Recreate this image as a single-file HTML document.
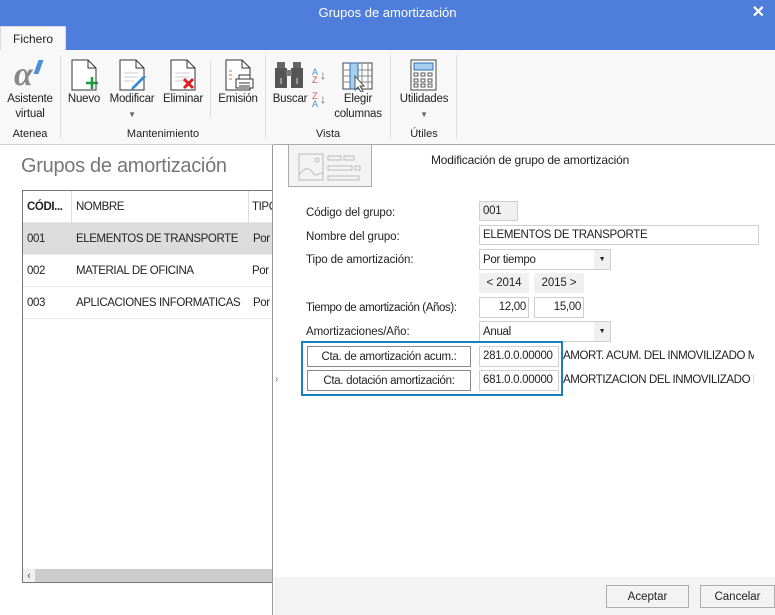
<!DOCTYPE html>
<html><head><meta charset="utf-8">
<style>
*{margin:0;padding:0;box-sizing:border-box}
body{width:775px;height:615px;overflow:hidden;background:#fff;font-family:"Liberation Sans",sans-serif;font-size:11.5px;color:#222;position:relative}
.abs{position:absolute}
.title{left:0;top:0;width:775px;height:50px;background:#4e7ddb}
.title .t{left:0;width:775px;top:5px;text-align:center;color:#fff;font-size:13px}
.tab{left:0;top:26px;width:66px;height:25px;background:#f8f8f8;border:1px solid #d8d8d8;border-bottom:none;text-align:center;line-height:24px;font-size:12px}
.ribbon{left:0;top:50px;width:775px;height:95px;background:#f8f8f8;border-bottom:1px solid #d0d0d0}
.lbl{font-size:11.5px;color:#222;text-align:center;line-height:15px;letter-spacing:-0.2px}
.sep{width:1px;background:#dcdcdc}
.grp{font-size:11px;color:#222;text-align:center}
.tbl{left:22px;top:190px;width:251px;height:393px;border:1px solid #777;border-right:none;overflow:hidden}
.row{position:absolute;left:0;width:260px;height:32px;border-bottom:1px solid #e8e8e8;line-height:32px;font-size:11.5px;letter-spacing:-0.4px}
.row span{position:absolute}
.panel{left:272px;top:145px;width:503px;height:470px;border-left:1px solid #999;background:#fff}
.f{position:absolute;font-size:11.5px;letter-spacing:-0.1px}
.in{position:absolute;border:1px solid #cfcfcf;background:#fff;height:20px;line-height:19px;padding-left:3px;font-size:11.5px;letter-spacing:-0.3px;white-space:nowrap;overflow:hidden}
.btn{position:absolute;border:1px solid #adadad;background:#f3f3f3;text-align:center;line-height:23px;font-size:11.5px}
</style></head><body>
<div class="abs title"><div class="abs t">Grupos de amortización</div>
<div class="abs" style="right:10px;top:2px;color:#fff;font-size:16px;font-weight:bold">✕</div></div>
<div class="abs tab">Fichero</div>
<div class="abs ribbon"></div>

<div class="abs" style="left:14px;top:60px;font-family:'Liberation Serif',serif;font-style:italic;font-size:34px;color:#888;line-height:30px;font-weight:bold">α</div>
<div class="abs" style="left:36px;top:60px;width:5px;height:14px;background:#4a90d9;transform:skewX(-20deg)"></div>
<div class="abs lbl" style="left:2px;top:92px;width:56px">Asistente<br>virtual</div>
<div class="abs grp" style="left:0;top:128px;width:60px">Atenea</div>
<div class="abs sep" style="left:60px;top:55px;height:84px"></div>

<svg class="abs" style="left:70px;top:59px" width="30" height="32"><path d="M2 1h16l8 8v22H2z" fill="#fff" stroke="#333"/><path d="M18 1v8h8" fill="none" stroke="#333"/><path d="M22 18v12M16 24h12" stroke="#1a9a3a" stroke-width="2.5"/></svg>
<div class="abs lbl" style="left:66px;top:92px;width:36px">Nuevo</div>
<svg class="abs" style="left:118px;top:59px" width="30" height="32"><path d="M2 1h16l8 8v22H2z" fill="#fff" stroke="#333"/><path d="M18 1v8h8" fill="none" stroke="#333"/><path d="M6 14h14M6 18h14M6 22h10" stroke="#ccc"/><path d="M14 28l12-12 2 2-12 12-3 1z" fill="#3a8ed6"/></svg>
<div class="abs lbl" style="left:104px;top:92px;width:56px">Modificar<br><span style="font-size:8px;color:#666">▼</span></div>
<svg class="abs" style="left:169px;top:59px" width="30" height="32"><path d="M2 1h16l8 8v22H2z" fill="#fff" stroke="#333"/><path d="M18 1v8h8" fill="none" stroke="#333"/><path d="M6 14h14M6 18h14M6 22h10" stroke="#ccc"/><path d="M15 20l9 9M24 20l-9 9" stroke="#e02020" stroke-width="3"/></svg>
<div class="abs lbl" style="left:160px;top:92px;width:46px">Eliminar</div>
<div class="abs sep" style="left:210px;top:60px;height:58px"></div>
<svg class="abs" style="left:224px;top:59px" width="32" height="32"><path d="M2 1h16l8 8v22H2z" fill="#fff" stroke="#333"/><path d="M18 1v8h8" fill="none" stroke="#333"/><path d="M5 12h3M5 16h3M5 20h3" stroke="#e07020"/><rect x="12" y="20" width="17" height="9" fill="#fff" stroke="#333"/><rect x="15" y="16" width="11" height="4" fill="#fff" stroke="#333"/><path d="M15 24h11M15 27h11" stroke="#333"/></svg>
<div class="abs lbl" style="left:216px;top:92px;width:44px">Emisión</div>
<div class="abs grp" style="left:62px;top:128px;width:202px">Mantenimiento</div>
<div class="abs sep" style="left:265px;top:55px;height:84px"></div>

<svg class="abs" style="left:274px;top:60px" width="32" height="30"><rect x="3" y="2" width="8" height="6" fill="#666"/><rect x="19" y="2" width="8" height="6" fill="#666"/><rect x="1" y="8" width="12" height="20" fill="#555"/><rect x="17" y="8" width="12" height="20" fill="#555"/><rect x="12" y="10" width="6" height="6" fill="#777"/><path d="M7 18v6M23 18v6" stroke="#ddd"/></svg>
<div class="abs lbl" style="left:270px;top:92px;width:40px">Buscar</div>
<div class="abs" style="left:312px;top:68px;font-size:9px;line-height:8px;color:#e05050"><span style="color:#4a90d9">A</span><br>Z</div>
<div class="abs" style="left:320px;top:68px;font-size:12px;color:#555">↓</div>
<div class="abs" style="left:312px;top:92px;font-size:9px;line-height:8px;color:#e05050">Z<br><span style="color:#4a90d9">A</span></div>
<div class="abs" style="left:320px;top:92px;font-size:12px;color:#555">↓</div>
<svg class="abs" style="left:342px;top:62px" width="32" height="30"><rect x="1" y="1" width="29" height="26" fill="#fff" stroke="#444"/><path d="M1 8h29M1 14h29M1 20h29M20 1v26M26 1v26" stroke="#888"/><rect x="8" y="1" width="8" height="26" fill="#a8cff0" stroke="#2a6fb0"/><path d="M13 14v14l3-3 3 5 2-1-3-5h4z" fill="#fff" stroke="#555"/></svg>
<div class="abs lbl" style="left:332px;top:92px;width:52px">Elegir<br>columnas</div>
<div class="abs grp" style="left:266px;top:128px;width:124px">Vista</div>
<div class="abs sep" style="left:390px;top:55px;height:84px"></div>
<svg class="abs" style="left:410px;top:59px" width="28" height="32"><rect x="1" y="1" width="25" height="30" fill="#fff" stroke="#444"/><rect x="4" y="4" width="19" height="7" fill="#a8cff0" stroke="#2a6fb0"/><g fill="none" stroke="#555"><rect x="4" y="14" width="4" height="3"/><rect x="11" y="14" width="4" height="3"/><rect x="18" y="14" width="4" height="3"/><rect x="4" y="20" width="4" height="3"/><rect x="11" y="20" width="4" height="3"/><rect x="18" y="20" width="4" height="3"/><rect x="4" y="25" width="4" height="3"/><rect x="11" y="25" width="4" height="3"/><rect x="18" y="25" width="4" height="3"/></g></svg>
<div class="abs lbl" style="left:394px;top:92px;width:60px">Utilidades<br><span style="font-size:8px;color:#666">▼</span></div>
<div class="abs grp" style="left:392px;top:128px;width:64px">Útiles</div>
<div class="abs sep" style="left:456px;top:55px;height:84px"></div>

<div class="abs" style="left:21px;top:155px;font-size:20px;color:#777;letter-spacing:-0.3px">Grupos de amortización</div>
<div class="abs tbl">
 <div class="row" style="top:0"><span style="left:4px;font-weight:bold">CÓDI...</span><span style="left:48px;top:0;width:1px;height:32px;background:#ddd"></span><span style="left:53px">NOMBRE</span><span style="left:225px;width:1px;height:32px;background:#ddd"></span><span style="left:229px">TIPO</span></div>
 <div class="row" style="top:32px;background:#dcdcdc"><span style="left:4px">001</span><span style="left:53px">ELEMENTOS DE TRANSPORTE</span><span style="left:229px;padding-left:1px">Por</span></div>
 <div class="row" style="top:64px"><span style="left:4px">002</span><span style="left:53px">MATERIAL DE OFICINA</span><span style="left:229px">Por</span></div>
 <div class="row" style="top:96px"><span style="left:4px">003</span><span style="left:53px">APLICACIONES INFORMATICAS</span><span style="left:229px;padding-left:1px">Por</span></div>
 <div class="abs" style="left:0;top:378px;width:260px;height:14px;background:#cdcdcd"></div>
 <div class="abs" style="left:0;top:378px;width:12px;height:14px;background:#f0f0f0;font-size:11px;line-height:14px;text-align:center;color:#555">‹</div>
</div>

<div class="abs panel">
 <div class="abs" style="left:0;top:-1px;width:503px;height:1px;background:#aaa"></div>
 <div class="abs" style="left:15px;top:0;width:84px;height:42px;background:#f3f3f3;border:1px solid #aaa;border-top:none"></div>
 <svg class="abs" style="left:25px;top:8px" width="68" height="28"><path d="M1 1h24v26H1z M1 22c6-8 10-8 14-2s8-4 10 2" fill="none" stroke="#bbb"/><circle cx="19" cy="7" r="2" fill="none" stroke="#bbb"/><path d="M30 3h13v4H30zM46 3h10v4H46zM30 13h24v4H30zM57 13h5v4h-5zM30 23h31v4H30z" fill="none" stroke="#bbb"/></svg>
 <div class="f" style="left:158px;top:8px;font-size:12px;letter-spacing:-0.2px">Modificación de grupo de amortización</div>
 <div class="f" style="left:33px;top:62px">Código del grupo:</div>
 <div class="in" style="left:206px;top:56px;width:39px;background:#f0f0f0">001</div>
 <div class="f" style="left:33px;top:86px">Nombre del grupo:</div>
 <div class="in" style="left:206px;top:80px;width:280px">ELEMENTOS DE TRANSPORTE</div>
 <div class="f" style="left:33px;top:109px">Tipo de amortización:</div>
 <div class="in" style="left:206px;top:104px;width:132px;height:21px;line-height:20px">Por tiempo<span style="position:absolute;right:0;top:0;width:16px;height:19px;background:#f0f0f0;font-size:7px;text-align:center">▼</span></div>
 <div class="f" style="left:206px;top:128px;width:50px;height:20px;background:#f0f0f0;text-align:center;line-height:20px">&lt; 2014</div>
 <div class="f" style="left:261px;top:128px;width:50px;height:20px;background:#f0f0f0;text-align:center;line-height:20px">2015 &gt;</div>
 <div class="f" style="left:33px;top:157px;letter-spacing:-0.4px">Tiempo de amortización (Años):</div>
 <div class="in" style="left:206px;top:152px;width:50px;height:21px;text-align:right;padding-right:2px">12,00</div>
 <div class="in" style="left:261px;top:152px;width:50px;height:21px;text-align:right;padding-right:2px">15,00</div>
 <div class="f" style="left:33px;top:181px">Amortizaciones/Año:</div>
 <div class="in" style="left:206px;top:176px;width:132px;height:21px;line-height:20px">Anual<span style="position:absolute;right:0;top:0;width:16px;height:19px;background:#f0f0f0;font-size:7px;text-align:center">▼</span></div>
 <div class="abs" style="left:28px;top:196px;width:262px;height:55px;border:2px solid #1a7fc1"></div>
 <div class="f" style="left:34px;top:201px;width:164px;height:21px;border:1px solid #888;text-align:center;line-height:20px;letter-spacing:-0.3px">Cta. de amortización acum.:</div>
 <div class="in" style="left:206px;top:201px;width:80px;height:21px">281.0.0.00000</div>
 <div class="f" style="left:290px;top:205px;white-space:nowrap;width:191px;overflow:hidden;letter-spacing:-0.4px">AMORT. ACUM. DEL INMOVILIZADO MAT</div>
 <div class="f" style="left:34px;top:225px;width:164px;height:21px;border:1px solid #888;text-align:center;line-height:20px;letter-spacing:-0.3px">Cta. dotación amortización:</div>
 <div class="in" style="left:206px;top:225px;width:80px;height:21px">681.0.0.00000</div>
 <div class="f" style="left:290px;top:229px;white-space:nowrap;width:191px;overflow:hidden;letter-spacing:-0.4px">AMORTIZACIÓN DEL INMOVILIZADO MAT</div>
 <div class="f" style="left:2px;top:229px;color:#777;font-size:10px">›</div>
 <div class="abs" style="left:1px;top:432px;width:502px;height:38px;background:#f3f3f3"></div>
 <div class="btn" style="left:333px;top:440px;width:83px;height:23px">Aceptar</div>
 <div class="btn" style="left:427px;top:440px;width:75px;height:23px">Cancelar</div>
</div>
</body></html>
